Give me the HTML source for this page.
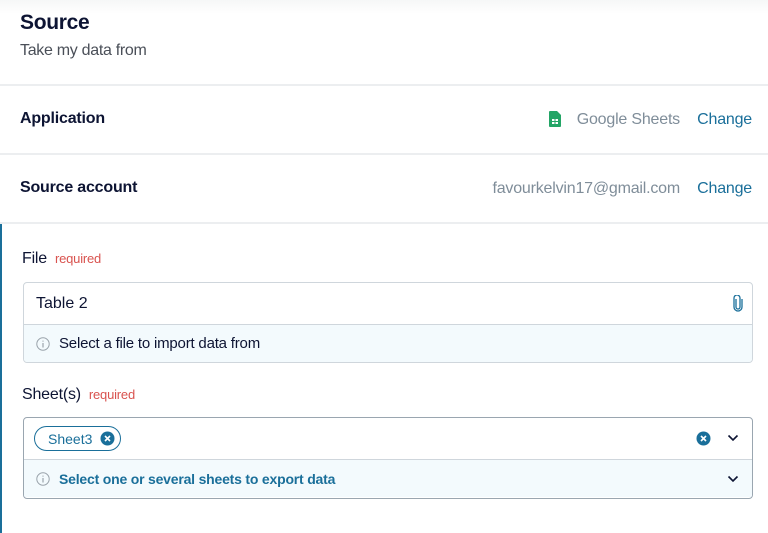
<!DOCTYPE html>
<html><head><meta charset="utf-8"><style>
*{box-sizing:border-box;margin:0;padding:0}
body{width:768px;height:533px;overflow:hidden;background:#fff;font-family:"Liberation Sans",sans-serif;position:relative;color:#0d1433}
.abs{position:absolute;white-space:nowrap}
.hr{position:absolute;left:0;width:768px;height:2px;background:#eceef0}
.lbl{font-size:16px;font-weight:bold;letter-spacing:-0.2px}
.gray{color:#7f8d99;font-size:16px;letter-spacing:-0.2px}
.chg{color:#1a6f9a;font-size:16px;letter-spacing:-0.2px}
.box{position:absolute;left:23px;width:730px;border:1px solid #cfd6dc;border-radius:4px;overflow:hidden}
.info{background:#f3fafd;border-top:1px solid #cfd6dc;height:38px;position:relative}
.req{color:#d9534f;font-size:13px;font-weight:normal;margin-left:8px}
</style></head><body>
<div style="position:absolute;left:0;top:0;width:768px;height:14px;background:linear-gradient(#f6f7f7,#fff)"></div>
<div class="abs" style="left:20px;top:11px;font-size:21px;font-weight:bold;letter-spacing:-0.3px">Source</div>
<div class="abs" style="left:20px;top:42px;font-size:16px;color:#4a4f58;letter-spacing:-0.3px">Take my data from</div>
<div class="hr" style="top:84px"></div>
<div class="abs lbl" style="left:20px;top:110px">Application</div>
<svg class="abs" style="left:549px;top:111px" width="12" height="16" viewBox="0 0 12 16"><path d="M0 1a1 1 0 0 1 1-1h7l4 4v11a1 1 0 0 1-1 1H1a1 1 0 0 1-1-1z" fill="#23a566"/><rect x="3" y="8" width="6" height="5" fill="#fff"/><path d="M3 10.5h6M6 8v5" stroke="#23a566"/></svg>
<div class="abs gray" style="right:88px;top:111px">Google Sheets</div>
<div class="abs chg" style="right:16px;top:111px">Change</div>
<div class="hr" style="top:153px"></div>
<div class="abs lbl" style="left:20px;top:179px">Source account</div>
<div class="abs gray" style="right:88px;top:180px">favourkelvin17@gmail.com</div>
<div class="abs chg" style="right:16px;top:180px">Change</div>
<div class="hr" style="top:222px"></div>
<div style="position:absolute;left:0;top:224px;width:2px;height:309px;background:#1a6f9a"></div>
<div class="abs lbl" style="left:22px;top:250px;font-weight:normal;color:#0d1433">File<span class="req">required</span></div>
<div class="box" style="top:282px;height:81px">
 <div style="height:41px;position:relative"><span class="abs" style="left:12px;top:12px;font-size:16px">Table 2</span>
 <svg class="abs" style="left:709px;top:12px" width="10" height="17" viewBox="0 0 10 17"><path d="M3 4v8a2 2 0 0 0 4 0V3a3 3 0 0 0-6 0v9a4 4 0 0 0 8 0V4" fill="none" stroke="#1a6f9a" stroke-width="1.3"/></svg></div>
 <div class="info"><svg class="abs" style="left:12px;top:12px" width="14" height="14"><circle cx="7" cy="7" r="6.2" fill="none" stroke="#9aa3ab"/><path d="M7 6v4.5M7 3.6v1" stroke="#9aa3ab" stroke-width="1.2"/></svg><span class="abs" style="left:35px;top:10px;font-size:15px;color:#0d1433;letter-spacing:-0.2px">Select a file to import data from</span></div>
</div>
<div class="abs lbl" style="left:22px;top:386px;font-weight:normal">Sheet(s)<span class="req">required</span></div>
<div class="box" style="top:417px;height:82px;border-color:#9aa6b0">
 <div style="height:41px;position:relative">
  <div class="abs" style="left:10px;top:8px;width:87px;height:25px;border:1px solid #1a6f9a;border-radius:13px"><span class="abs" style="left:13px;top:4px;font-size:14px;color:#1a6f9a">Sheet3</span><svg class="abs" style="left:65px;top:4px" width="15" height="15"><circle cx="7.5" cy="7.5" r="7" fill="#1a6f9a"/><path d="M5 5l5 5M10 5l-5 5" stroke="#fff" stroke-width="1.6"/></svg></div>
  <svg class="abs" style="left:672px;top:13px" width="15" height="15"><circle cx="7.5" cy="7.5" r="7" fill="#1a6f9a"/><path d="M5 5l5 5M10 5l-5 5" stroke="#fff" stroke-width="1.6"/></svg>
  <svg class="abs" style="left:703px;top:16px" width="12" height="8"><path d="M1.5 1.5l4.5 4.5 4.5-4.5" fill="none" stroke="#0d1433" stroke-width="1.6"/></svg>
 </div>
 <div class="info" style="border-color:#cfd6dc"><svg class="abs" style="left:12px;top:12px" width="14" height="14"><circle cx="7" cy="7" r="6.2" fill="none" stroke="#9aa3ab"/><path d="M7 6v4.5M7 3.6v1" stroke="#9aa3ab" stroke-width="1.2"/></svg><span class="abs" style="left:35px;top:11px;font-size:14px;color:#1a6f9a;font-weight:bold;letter-spacing:-0.2px">Select one or several sheets to export data</span>
 <svg class="abs" style="left:703px;top:15px" width="12" height="8"><path d="M1.5 1.5l4.5 4.5 4.5-4.5" fill="none" stroke="#0d1433" stroke-width="1.6"/></svg></div>
</div>
</body></html>
